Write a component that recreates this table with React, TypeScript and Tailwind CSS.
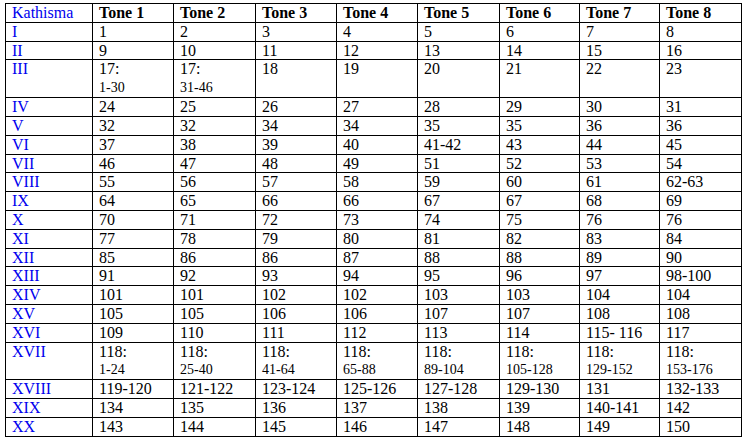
type Cell = string | [string, string];

const tones = ["Tone 1", "Tone 2", "Tone 3", "Tone 4", "Tone 5", "Tone 6", "Tone 7", "Tone 8"];

const rows: { k: string; cells: Cell[] }[] = [
  { k: "I", cells: ["1", "2", "3", "4", "5", "6", "7", "8"] },
  { k: "II", cells: ["9", "10", "11", "12", "13", "14", "15", "16"] },
  { k: "III", cells: [["17:", "1-30"], ["17:", "31-46"], "18", "19", "20", "21", "22", "23"] },
  { k: "IV", cells: ["24", "25", "26", "27", "28", "29", "30", "31"] },
  { k: "V", cells: ["32", "32", "34", "34", "35", "35", "36", "36"] },
  { k: "VI", cells: ["37", "38", "39", "40", "41-42", "43", "44", "45"] },
  { k: "VII", cells: ["46", "47", "48", "49", "51", "52", "53", "54"] },
  { k: "VIII", cells: ["55", "56", "57", "58", "59", "60", "61", "62-63"] },
  { k: "IX", cells: ["64", "65", "66", "66", "67", "67", "68", "69"] },
  { k: "X", cells: ["70", "71", "72", "73", "74", "75", "76", "76"] },
  { k: "XI", cells: ["77", "78", "79", "80", "81", "82", "83", "84"] },
  { k: "XII", cells: ["85", "86", "86", "87", "88", "88", "89", "90"] },
  { k: "XIII", cells: ["91", "92", "93", "94", "95", "96", "97", "98-100"] },
  { k: "XIV", cells: ["101", "101", "102", "102", "103", "103", "104", "104"] },
  { k: "XV", cells: ["105", "105", "106", "106", "107", "107", "108", "108"] },
  { k: "XVI", cells: ["109", "110", "111", "112", "113", "114", "115- 116", "117"] },
  {
    k: "XVII",
    cells: [
      ["118:", "1-24"],
      ["118:", "25-40"],
      ["118:", "41-64"],
      ["118:", "65-88"],
      ["118:", "89-104"],
      ["118:", "105-128"],
      ["118:", "129-152"],
      ["118:", "153-176"],
    ],
  },
  { k: "XVIII", cells: ["119-120", "121-122", "123-124", "125-126", "127-128", "129-130", "131", "132-133"] },
  { k: "XIX", cells: ["134", "135", "136", "137", "138", "139", "140-141", "142"] },
  { k: "XX", cells: ["143", "144", "145", "146", "147", "148", "149", "150"] },
];

const cell = "border border-black px-[6px] py-0 align-top text-left";

export default function App() {
  return (
    <div className="w-[748px] h-[442px] bg-white pt-[3px] pl-[5px] font-['Liberation_Serif','Times_New_Roman',serif] text-[16px] leading-[17.8px] text-black">
      <table className="table-fixed border-collapse border border-black w-[737px]">
        <colgroup>
          <col className="w-[87px]" />
          <col className="w-[81px]" />
          <col className="w-[82px]" />
          <col className="w-[81px]" />
          <col className="w-[81px]" />
          <col className="w-[82px]" />
          <col className="w-[80px]" />
          <col className="w-[80px]" />
          <col className="w-[82px]" />
        </colgroup>
        <thead>
          <tr>
            <th className={`${cell} font-normal text-[#0000ee]`}>Kathisma</th>
            {tones.map((t) => (
              <th key={t} className={`${cell} font-bold`}>
                {t}
              </th>
            ))}
          </tr>
        </thead>
        <tbody>
          {rows.map((r) => (
            <tr key={r.k}>
              <td className={`${cell} text-[#0000ee]`}>{r.k}</td>
              {r.cells.map((c, i) => (
                <td key={i} className={cell}>
                  {Array.isArray(c) ? (
                    <>
                      <span className="block">{c[0]}</span>
                      <span className="block text-[14px] leading-[19px]">{c[1]}</span>
                    </>
                  ) : (
                    c
                  )}
                </td>
              ))}
            </tr>
          ))}
        </tbody>
      </table>
    </div>
  );
}
